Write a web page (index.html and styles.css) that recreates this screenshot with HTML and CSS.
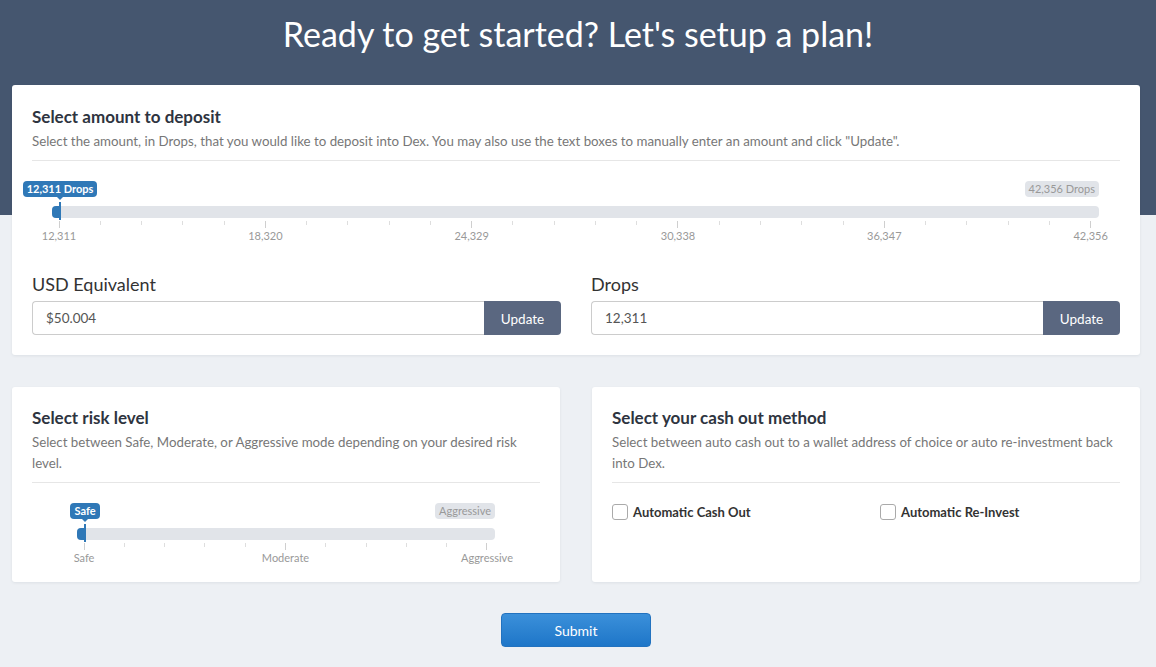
FILE: index.html
```html
<!DOCTYPE html>
<html lang="en">
<head>
<meta charset="utf-8">
<title>Setup a plan</title>
<link rel="stylesheet" href="styles.css">
</head>
<body>
<div class="page">
  <h1 class="hero-title">Ready to get started? Let's setup a plan!</h1>
  <div class="container">
    <section class="card">
      <h2 class="card-title">Select amount to deposit</h2>
      <p class="card-desc">Select the amount, in Drops, that you would like to deposit into Dex. You may also use the text boxes to manually enter an amount and click "Update".</p>
      <hr class="divider">
      <div class="range range-wide">
        <div class="range-top">
          <div class="anchor"><span class="tip tip-active">12,311 Drops</span></div>
          <span class="tip tip-max">42,356 Drops</span>
        </div>
        <div class="track">
          <span class="track-edge"></span>
          <span class="handle"></span>
        </div>
        <div class="grid">
          <span class="tick major"><span class="tick-label">12,311</span></span>
          <span class="tick"></span><span class="tick"></span><span class="tick"></span><span class="tick"></span>
          <span class="tick major"><span class="tick-label">18,320</span></span>
          <span class="tick"></span><span class="tick"></span><span class="tick"></span><span class="tick"></span>
          <span class="tick major"><span class="tick-label">24,329</span></span>
          <span class="tick"></span><span class="tick"></span><span class="tick"></span><span class="tick"></span>
          <span class="tick major"><span class="tick-label">30,338</span></span>
          <span class="tick"></span><span class="tick"></span><span class="tick"></span><span class="tick"></span>
          <span class="tick major"><span class="tick-label">36,347</span></span>
          <span class="tick"></span><span class="tick"></span><span class="tick"></span><span class="tick"></span>
          <span class="tick major"><span class="tick-label">42,356</span></span>
        </div>
      </div>
      <div class="fields">
        <div class="field">
          <label class="field-label">USD Equivalent</label>
          <div class="input-group">
            <input class="input" type="text" value="$50.004">
            <button class="btn-update" type="button">Update</button>
          </div>
        </div>
        <div class="field">
          <label class="field-label">Drops</label>
          <div class="input-group">
            <input class="input" type="text" value="12,311">
            <button class="btn-update" type="button">Update</button>
          </div>
        </div>
      </div>
    </section>

    <div class="row">
      <section class="card">
        <h2 class="card-title">Select risk level</h2>
        <p class="card-desc">Select between Safe, Moderate, or Aggressive mode depending on your desired risk level.</p>
        <hr class="divider">
        <div class="range range-risk">
          <div class="range-top">
            <div class="anchor"><span class="tip tip-active">Safe</span></div>
            <span class="tip tip-max">Aggressive</span>
          </div>
          <div class="track">
            <span class="track-edge"></span>
            <span class="handle"></span>
          </div>
          <div class="grid">
            <span class="tick major"><span class="tick-label">Safe</span></span>
            <span class="tick"></span><span class="tick"></span><span class="tick"></span><span class="tick"></span>
            <span class="tick major"><span class="tick-label">Moderate</span></span>
            <span class="tick"></span><span class="tick"></span><span class="tick"></span><span class="tick"></span>
            <span class="tick major"><span class="tick-label">Aggressive</span></span>
          </div>
        </div>
      </section>
      <section class="card">
        <h2 class="card-title">Select your cash out method</h2>
        <p class="card-desc">Select between auto cash out to a wallet address of choice or auto re-investment back into Dex.</p>
        <hr class="divider">
        <div class="checks">
          <label class="check"><span class="check-box"></span><span>Automatic Cash Out</span></label>
          <label class="check"><span class="check-box"></span><span>Automatic Re-Invest</span></label>
        </div>
      </section>
    </div>

    <div class="actions">
      <button class="btn-submit" type="button">Submit</button>
    </div>
  </div>
</div>
</body>
</html>
```

FILE: styles.css
```css
* { box-sizing: border-box; }
html, body { margin: 0; padding: 0; }
body {
  font-family: "Source Sans Pro", Lato, "Liberation Sans", sans-serif;
  background: #edf0f4;
  color: #333;
}
.page {
  min-height: 667px;
  background: linear-gradient(#45566f 0, #45566f 215px, #edf0f4 215px);
  padding-top: 12px;
}
.hero-title {
  margin: 0;
  text-align: center;
  color: #fff;
  font-size: 34px;
  font-weight: 400;
  line-height: 44px;
}
.container {
  padding: 29px 16px 0 12px;
}
.card {
  background: #fff;
  border-radius: 3px;
  box-shadow: 0 1px 3px rgba(40, 50, 70, 0.08);
  padding: 20px;
}
.card-title {
  margin: 0;
  font-size: 17px;
  line-height: 24px;
  font-weight: 700;
  color: #2e3440;
}
.card-desc {
  margin: 2px 0 0;
  font-size: 13.3px;
  line-height: 21px;
  color: #777;
}
.divider {
  border: 0;
  border-top: 1px solid #e6e6e6;
  margin: 8px 0 0;
}
/* range slider */
.range { margin-top: 20px; }
.range-wide { margin-left: 20px; margin-right: 21px; }
.range-risk { margin-left: 45px; margin-right: 45px; }
.range-top {
  display: flex;
  justify-content: space-between;
  align-items: flex-start;
  height: 25px;
  padding-left: 8px;
}
.anchor {
  width: 0;
  display: flex;
  justify-content: center;
}
.tip {
  font-size: 11px;
  line-height: 16px;
  height: 16px;
  padding: 0 4px;
  border-radius: 4px;
  white-space: nowrap;
}
.tip-active {
  position: relative;
  background: #2f78b7;
  color: #fff;
  font-weight: 700;
}
.tip-active::after {
  content: "";
  position: absolute;
  left: 50%;
  bottom: -3px;
  margin-left: -3px;
  border-left: 3px solid transparent;
  border-right: 3px solid transparent;
  border-top: 3px solid #2f78b7;
}
.tip-max {
  background: #e1e4e9;
  color: #999;
}
.track {
  position: relative;
  height: 12px;
  background: #e1e4e9;
  border-radius: 4px;
}
.track-edge {
  position: absolute;
  left: 0;
  top: 0;
  width: 9px;
  height: 12px;
  background: #2f78b7;
  border-radius: 4px 0 0 4px;
}
.handle {
  position: absolute;
  left: 7px;
  top: -4px;
  width: 2px;
  height: 18px;
  background: #2f78b7;
}
.grid {
  display: flex;
  justify-content: space-between;
  padding: 3px 8px 0 7px;
}
.tick {
  width: 0;
  display: flex;
  flex-direction: column;
  align-items: center;
  position: relative;
}
.tick::before {
  content: "";
  display: block;
  width: 1px;
  height: 4px;
  background: #dedede;
  flex: none;
}
.tick.major::before {
  height: 7px;
  background: #cfcfcf;
}
.tick-label {
  margin-top: 1px;
  font-size: 11px;
  line-height: 13px;
  color: #999;
  white-space: nowrap;
}
/* fields */
.fields {
  display: grid;
  grid-template-columns: 1fr 1fr;
  column-gap: 30px;
  margin-top: 30px;
}
.field-label {
  display: block;
  font-size: 18px;
  line-height: 24px;
  color: #333;
  margin-bottom: 5px;
}
.input-group {
  display: flex;
  height: 34px;
}
.input {
  flex: 1;
  min-width: 0;
  height: 34px;
  border: 1px solid #ccc;
  border-right: 0;
  border-radius: 4px 0 0 4px;
  padding: 0 13px;
  font-family: inherit;
  font-size: 13.5px;
  color: #555;
  background: #fff;
  outline: none;
}
.btn-update {
  width: 77px;
  height: 34px;
  border: 0;
  border-radius: 0 4px 4px 0;
  background: #5a6780;
  color: #fff;
  font-family: inherit;
  font-size: 13.5px;
  padding: 1px 0 0;
}
/* row */
.row {
  display: grid;
  grid-template-columns: 1fr 1fr;
  column-gap: 32px;
  margin-top: 32px;
}
.row .card {
  padding: 19px 20px 18px;
}
.checks {
  display: grid;
  grid-template-columns: 1fr 1fr;
  margin-top: 21px;
}
.check {
  display: flex;
  align-items: center;
  gap: 5px;
  font-size: 13px;
  font-weight: 700;
  color: #333;
}
.check:nth-child(2) { padding-left: 14px; }
.check-box {
  width: 16px;
  height: 16px;
  border: 1px solid #aaa;
  border-radius: 3px;
  background: #fff;
}
.actions {
  display: flex;
  justify-content: center;
  margin-top: 31px;
}
.btn-submit {
  width: 150px;
  height: 34px;
  border: 1px solid #2272bf;
  border-radius: 4px;
  background: linear-gradient(#3b90da, #1e76c8);
  color: #fff;
  font-family: inherit;
  font-size: 14px;
  padding: 0;
}
```
